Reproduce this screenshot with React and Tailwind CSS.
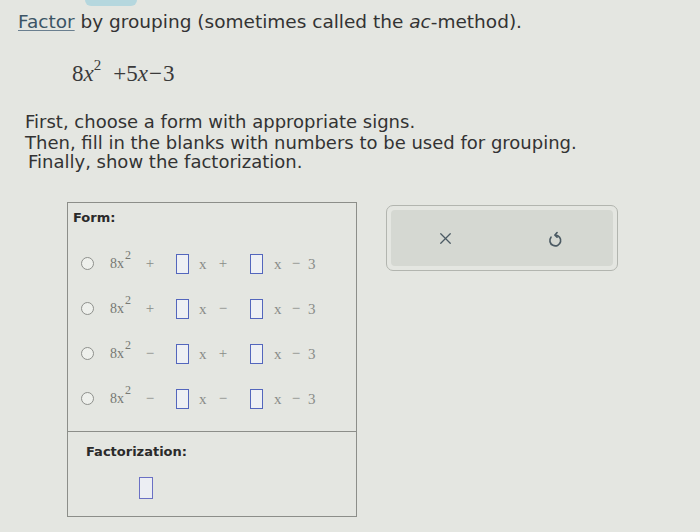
import { X } from 'lucide-react';

const SANS = { fontFamily: '"DejaVu Sans", Verdana, sans-serif' };
const SERIF = "font-['Liberation_Serif',serif]";

function Blank() {
  return <span className="inline-block align-middle w-[13px] h-[20px] border-[1.5px] border-[#5366bd] bg-[#eef0f4]" />;
}

function Op({ children, w }) {
  return <span className={`${SERIF} ${w} text-center text-[15px] text-[#8a8c88]`}>{children}</span>;
}

function FormRow({ s1, s2 }) {
  return (
    <div className="flex items-center h-[45px]">
      <span className="w-[13px] h-[13px] rounded-full border-[1.5px] border-[#8e908c] bg-[#eef0ec] ml-[13px]" />
      <span className={`ml-[16px] w-[30px] ${SERIF} text-[14px] text-[#777974]`}>
        8x<span className="inline-block text-[12px] -translate-y-[9px] translate-x-[1px]">2</span>
      </span>
      <Op w="w-[20px]">{s1}</Op>
      <span className="ml-[16px]"><Blank /></span>
      <span className="ml-[10px] w-[14px]"><Op w="">x</Op></span>
      <Op w="w-[20px]">{s2}</Op>
      <span className="ml-[17px]"><Blank /></span>
      <span className="ml-[11px] w-[12px]"><Op w="">x</Op></span>
      <Op w="w-[20px]">−</Op>
      <span className="ml-[2px]"><Op w="">3</Op></span>
    </div>
  );
}

export default function App() {
  return (
    <div className="w-[700px] h-[532px] bg-[#e4e6e1] overflow-hidden text-[#333] flex flex-col" style={SANS}>
      {/* leftover bit of the tab bar above */}
      <div className="ml-[85px] w-[52px] h-[6px] rounded-b-lg bg-[#b5d7de]" />

      <p className="mt-[4px] ml-[18px] text-[18.5px] leading-[24px] text-[#333]">
        <span className="underline underline-offset-2 decoration-[#6a7f8f] text-[#3c5566]">Factor</span> by grouping (sometimes called the <i>ac</i>-method).
      </p>

      <div className={`mt-[28px] ml-[72px] ${SERIF} text-[23px] leading-[24px] text-[#3a3a3a]`}>
        8<i>x</i><span className="inline-block text-[15px] -translate-y-[11px]">2</span>
        <span className="ml-[12px]">+5<i>x</i><span className="mx-[1px]">−</span>3</span>
      </div>

      <div className="mt-[24px] ml-[25px] text-[18px] leading-[20px] text-[#333]">
        <p>First, choose a form with appropriate signs.</p>
        <p className="mt-[1px]">Then, fill in the blanks with numbers to be used for grouping.</p>
        <p className="ml-[3px] -mt-[1px]">Finally, show the factorization.</p>
      </div>

      <div className="mt-[30px] flex items-start">
        {/* answer area */}
        <div className="ml-[67px] w-[290px] h-[315px] border border-[#8c8e89] flex flex-col">
          <div className="h-[229px] border-b border-[#8c8e89]">
            <p className="ml-[5px] mt-[6px] text-[13px] font-bold leading-[18px] text-[#2a2a2a]">Form:</p>
            <div className="mt-[14px] flex flex-col">
              <FormRow s1="+" s2="+" />
              <FormRow s1="+" s2="−" />
              <FormRow s1="−" s2="+" />
              <FormRow s1="−" s2="−" />
            </div>
          </div>
          <p className="ml-[18px] mt-[11px] text-[13px] font-bold leading-[18px] text-[#2a2a2a]">Factorization:</p>
          <div className="ml-[71px] mt-[16px]">
            <span className="block w-[14px] h-[22px] border-[1.5px] border-[#6a70c4] bg-[#eceef3]" />
          </div>
        </div>

        {/* tools */}
        <div className="ml-[29px] mt-[3px] w-[232px] h-[66px] rounded-[7px] border border-[#b2b5af] p-[4px]">
          <div className="h-full rounded-[4px] bg-[#d5d8d2] flex items-center">
            <X className="ml-[45px] w-[19px] h-[19px] text-[#4b5a63]" strokeWidth={1.6} />
            <svg className="ml-[90px] w-[20px] h-[20px]" viewBox="0 0 24 24" fill="none" stroke="#4b5a63" strokeWidth="2" strokeLinecap="round" strokeLinejoin="round">
              <path d="M12.5 8.5 A6.5 6.5 0 1 1 7.2 11" />
              <path d="M14.5 5.5 L12 8.5 L14.5 11" />
            </svg>
          </div>
        </div>
      </div>
    </div>
  );
}
